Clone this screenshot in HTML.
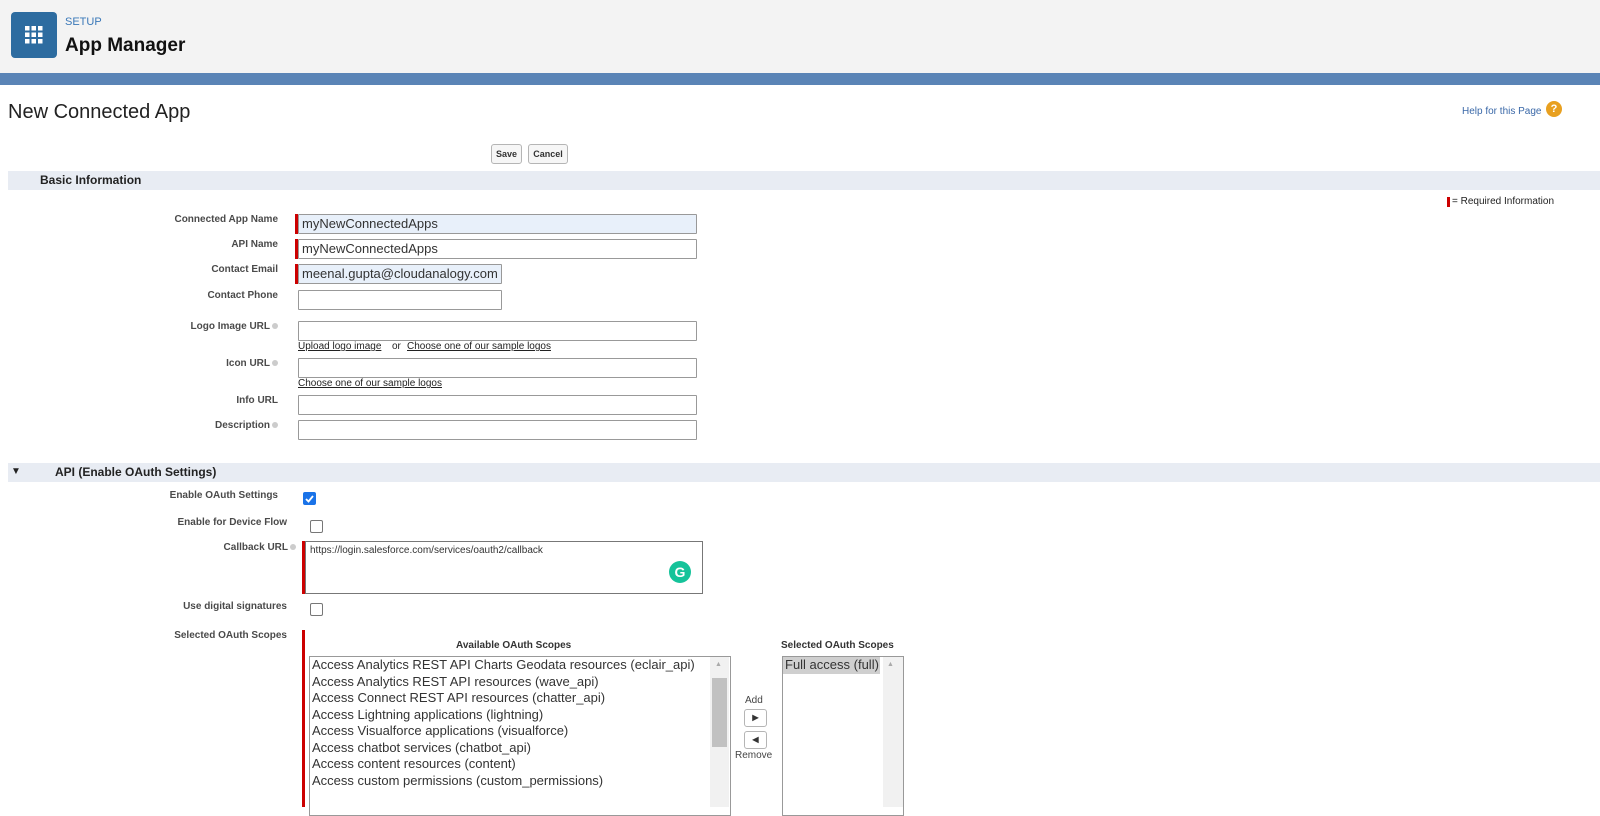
<!DOCTYPE html>
<html><head><meta charset="utf-8"><style>
*{margin:0;padding:0;box-sizing:border-box}
body{width:1600px;height:807px;overflow:hidden;background:#fff;font-family:"Liberation Sans",Arial,sans-serif;position:relative;color:#222}
.a{position:absolute}
.lbl{position:absolute;font-size:10px;font-weight:bold;color:#4a4a4a;text-align:right;width:270px;left:8px}
.lbl i{display:inline-block;width:6px;height:6px;border-radius:50%;background:#ccc;margin-left:2px;vertical-align:middle}
.in{position:absolute;border:1px solid #999;background:#fff;height:20px;font-size:13px;padding-left:3px;line-height:18px;color:#333;border-radius:1px}
.req{position:absolute;width:3px;background:#c00}
.lnk{position:absolute;font-size:10px;text-decoration:underline;color:#222}
.cb{position:absolute;width:13px;height:13px;border:1px solid #777;border-radius:2px;background:#fff}
.bar{position:absolute;left:8px;right:0;background:#e8ecf3;height:19px;font-size:12px;font-weight:bold;color:#222;line-height:19px}
.btn{position:absolute;border:1px solid #b5b5b5;border-radius:3px;background:#f6f6f6;font-size:9px;font-weight:bold;color:#333;text-align:center;line-height:18px;height:20px}
.it{font-size:13px;color:#333;line-height:16.5px;white-space:nowrap}
</style></head><body>
<div class="a" style="left:0;top:0;width:1600px;height:73px;background:#f3f3f3"></div>
<div class="a" style="left:0;top:73px;width:1600px;height:12px;background:#5a84b6"></div>
<div class="a" style="left:11px;top:12px;width:46px;height:46px;background:#2d6ca0;border-radius:4px"></div>
<svg class="a" style="left:24px;top:25px" width="20" height="20"><g fill="#fff">
<rect x="1" y="1" width="4.5" height="4.5"/><rect x="7.5" y="1" width="4.5" height="4.5"/><rect x="14" y="1" width="4.5" height="4.5"/>
<rect x="1" y="7.5" width="4.5" height="4.5"/><rect x="7.5" y="7.5" width="4.5" height="4.5"/><rect x="14" y="7.5" width="4.5" height="4.5"/>
<rect x="1" y="14" width="4.5" height="4.5"/><rect x="7.5" y="14" width="4.5" height="4.5"/><rect x="14" y="14" width="4.5" height="4.5"/></g></svg>
<div class="a" style="left:65px;top:16px;font-size:11px;color:#3a78b8">SETUP</div>
<div class="a" style="left:65px;top:35px;font-size:19px;font-weight:bold;color:#111">App Manager</div>

<div class="a" style="left:8px;top:101px;font-size:20px;color:#222">New Connected App</div>
<div class="a" style="left:1462px;top:106px;font-size:10px;color:#3a68a8">Help for this Page</div>
<div class="a" style="left:1546px;top:101px;width:16px;height:16px;border-radius:50%;background:#e8a020;color:#fff;font-size:11px;font-weight:bold;text-align:center;line-height:16px">?</div>

<div class="btn" style="left:491px;top:144px;width:31px">Save</div>
<div class="btn" style="left:528px;top:144px;width:40px">Cancel</div>

<div class="bar" style="top:171px;padding-left:32px">Basic Information</div>
<div class="req" style="left:1447px;top:197px;height:10px"></div>
<div class="a" style="left:1452px;top:196px;font-size:10px;color:#222">= Required Information</div>

<div class="lbl" style="top:214px">Connected App Name</div>
<div class="req" style="left:295px;top:214px;height:20px"></div>
<div class="in" style="left:298px;top:214px;width:399px;background:#e8f0fa">myNewConnectedApps</div>
<div class="lbl" style="top:239px">API Name</div>
<div class="req" style="left:295px;top:239px;height:20px"></div>
<div class="in" style="left:298px;top:239px;width:399px">myNewConnectedApps</div>
<div class="lbl" style="top:264px">Contact Email</div>
<div class="req" style="left:295px;top:264px;height:20px"></div>
<div class="in" style="left:298px;top:264px;width:204px;background:#e8f0fa">meenal.gupta@cloudanalogy.com</div>
<div class="lbl" style="top:290px">Contact Phone</div>
<div class="in" style="left:298px;top:290px;width:204px"></div>
<div class="lbl" style="top:321px">Logo Image URL<i></i></div>
<div class="in" style="left:298px;top:321px;width:399px"></div>
<div class="lnk" style="left:298px;top:341px">Upload logo image</div><div class="a" style="left:392px;top:341px;font-size:10px">or</div><div class="lnk" style="left:407px;top:341px">Choose one of our sample logos</div>
<div class="lbl" style="top:358px">Icon URL<i></i></div>
<div class="in" style="left:298px;top:358px;width:399px"></div>
<div class="lnk" style="left:298px;top:378px">Choose one of our sample logos</div>
<div class="lbl" style="top:395px">Info URL</div>
<div class="in" style="left:298px;top:395px;width:399px"></div>
<div class="lbl" style="top:420px">Description<i></i></div>
<div class="in" style="left:298px;top:420px;width:399px"></div>

<div class="bar" style="top:463px;padding-left:47px">API (Enable OAuth Settings)</div>
<div class="a" style="left:11px;top:466px;font-size:10px">▼</div>
<div class="lbl" style="top:490px">Enable OAuth Settings</div>
<div class="cb" style="left:303px;top:492px;background:#1a73e8;border-color:#1a73e8"><svg width="11" height="11" style="position:absolute;left:0;top:0"><path d="M2 6l2.5 2.5L9 3" stroke="#fff" stroke-width="1.8" fill="none"/></svg></div>
<div class="lbl" style="top:517px;width:279px">Enable for Device Flow</div>
<div class="cb" style="left:310px;top:520px"></div>
<div class="lbl" style="top:542px;width:288px">Callback URL<i></i></div>
<div class="req" style="left:302px;top:541px;height:53px"></div>
<div class="a" style="left:305px;top:541px;width:398px;height:53px;border:1px solid #777;font-size:10px;padding:3px 4px;color:#333">https://login.salesforce.com/services/oauth2/callback</div>
<div class="a" style="left:669px;top:561px;width:22px;height:22px;border-radius:50%;background:#15c39a;color:#fff;font-weight:bold;font-size:14px;text-align:center;line-height:22px">G</div>
<div class="lbl" style="top:601px;width:279px">Use digital signatures</div>
<div class="cb" style="left:310px;top:603px"></div>
<div class="lbl" style="top:630px;width:279px">Selected OAuth Scopes</div>
<div class="req" style="left:302px;top:630px;height:177px"></div>
<div class="a" style="left:456px;top:640px;font-size:10px;font-weight:bold;color:#333">Available OAuth Scopes</div>
<div class="a" style="left:309px;top:656px;width:422px;height:160px;border:1px solid #999;padding-left:2px">
<div class="it">Access Analytics REST API Charts Geodata resources (eclair_api)</div>
<div class="it">Access Analytics REST API resources (wave_api)</div>
<div class="it">Access Connect REST API resources (chatter_api)</div>
<div class="it">Access Lightning applications (lightning)</div>
<div class="it">Access Visualforce applications (visualforce)</div>
<div class="it">Access chatbot services (chatbot_api)</div>
<div class="it">Access content resources (content)</div>
<div class="it">Access custom permissions (custom_permissions)</div>
</div>
<div class="a" style="left:710px;top:657px;width:19px;height:150px;background:#f1f1f1"></div>
<div class="a" style="left:712px;top:678px;width:15px;height:69px;background:#c1c1c1"></div>
<div class="a" style="left:715px;top:661px;font-size:7px;color:#aaa">▲</div>
<div class="a" style="left:745px;top:695px;font-size:10px;color:#444">Add</div>
<div class="btn" style="left:744px;top:709px;width:23px;height:18px;line-height:16px;font-size:8px;background:#fff">▶</div>
<div class="btn" style="left:744px;top:731px;width:23px;height:18px;line-height:16px;font-size:8px;background:#fff">◀</div>
<div class="a" style="left:735px;top:750px;font-size:10px;color:#444">Remove</div>
<div class="a" style="left:781px;top:640px;font-size:10px;font-weight:bold;color:#333">Selected OAuth Scopes</div>
<div class="a" style="left:782px;top:656px;width:122px;height:160px;border:1px solid #999"></div>
<div class="a" style="left:783px;top:657px;width:97px;height:17px;background:#cfcfcf;font-size:13px;color:#333;padding-left:2px;line-height:16px">Full access (full)</div>
<div class="a" style="left:883px;top:657px;width:20px;height:150px;background:#f1f1f1"></div>
<div class="a" style="left:887px;top:661px;font-size:7px;color:#aaa">▲</div>
</body></html>
